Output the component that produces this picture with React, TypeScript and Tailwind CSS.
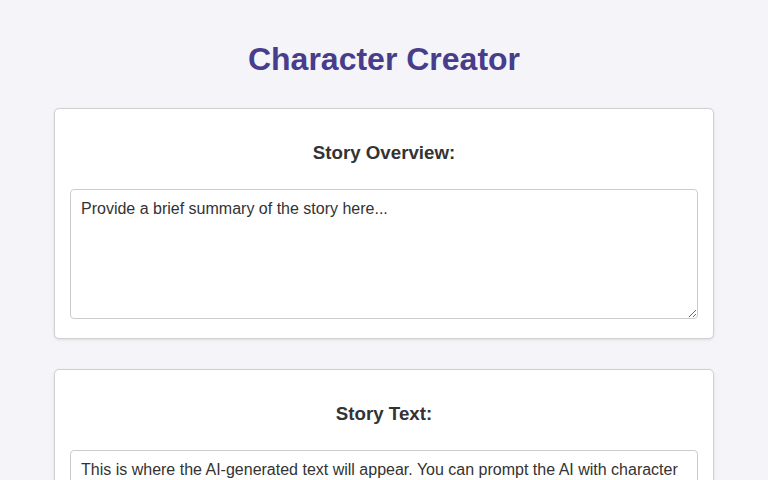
import React from "react";

const sections = [
  {
    title: "Story Overview:",
    text: "Provide a brief summary of the story here...",
  },
  {
    title: "Story Text:",
    text: "This is where the AI-generated text will appear. You can prompt the AI with character details and story elements to generate the narrative.",
  },
];

const App: React.FC = () => {
  return (
    <div
      className="min-h-screen bg-[#f4f4f9] px-5 pb-8"
      style={{ fontFamily: '"Liberation Sans", Arial, sans-serif' }}
    >
      <h1 className="pt-[41px] pb-[30px] text-center text-[32px] leading-[37px] font-bold text-[#483d8b]">
        Character Creator
      </h1>
      {sections.map((s) => (
        <div
          key={s.title}
          className="mx-auto mb-[30px] w-[660px] rounded-[5px] border border-[#d0d0d0] bg-white p-[15px] shadow-[0_1px_3px_rgba(0,0,0,0.1)]"
        >
          <h2 className="mt-[18px] mb-[25px] text-center text-[18.72px] leading-[22px] font-bold text-[#333]">
            {s.title}
          </h2>
          <textarea
            className="block h-[130px] w-full resize-y rounded-[4px] border border-[#ccc] p-[10px] text-base leading-[18px] text-[#333] outline-none"
            defaultValue={s.text}
          />
          <div className="h-[4px]" />
        </div>
      ))}
    </div>
  );
};

export default App;
